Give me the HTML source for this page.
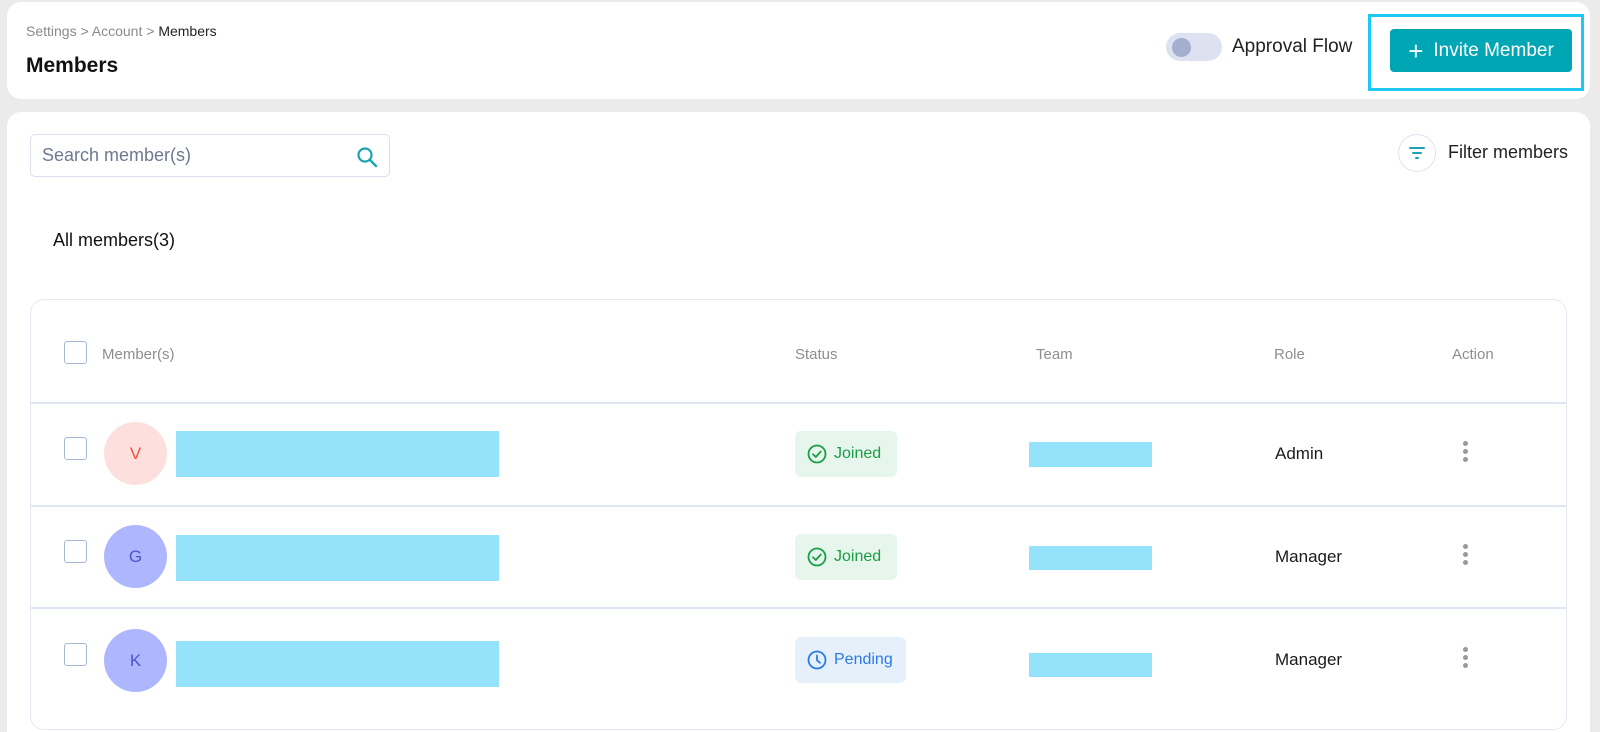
<!DOCTYPE html>
<html style="overflow:hidden;width:1600px;height:732px"><head><meta charset="utf-8"><style>
*{box-sizing:border-box;margin:0;padding:0}
body{width:1600px;height:732px;background:#ebebeb;font-family:"Liberation Sans",sans-serif;position:relative;overflow:hidden;color:#1a1a1a}
.abs{position:absolute}
.card{position:absolute;background:#fff;border-radius:14px}
.hdr{font-size:15px;color:#8e8e8e;top:346px}
.cb{position:absolute;width:23px;height:23px;border:1.5px solid #a9b6d3;border-radius:3px;background:#fff}
.line{position:absolute;left:31px;width:1535px;height:2px;background:#e1e6f3}
.av{position:absolute;width:63px;height:63px;border-radius:50%;font-size:17px;display:flex;align-items:center;justify-content:center}
.blue{position:absolute;background:#94e3fa}
.badge{position:absolute;height:46px;border-radius:6px;font-size:16px;display:flex;align-items:center;padding-left:12px;gap:7px}
.role{position:absolute;left:1275px;font-size:17px}
.dots{position:absolute;left:1463px;width:5px}
.dots i{display:block;width:5px;height:5px;border-radius:50%;background:#999;margin-bottom:3px}
</style></head><body>
<div class="card" style="left:7px;top:2px;width:1583px;height:97px"></div>
<div class="abs" style="left:26px;top:23px;font-size:14px;color:#8a8a8a">Settings &gt; Account &gt; <span style="color:#222">Members</span></div>
<div class="abs" style="left:26px;top:54px;font-size:21px;font-weight:bold;color:#111">Members</div>
<div class="abs" style="left:1166px;top:33px;width:56px;height:28px;border-radius:14px;background:#dde1f0"></div>
<div class="abs" style="left:1172px;top:38px;width:19px;height:19px;border-radius:50%;background:#a4afd0"></div>
<div class="abs" style="left:1232px;top:36px;font-size:19px;color:#222">Approval Flow</div>
<div class="abs" style="left:1368px;top:14px;width:216px;height:77px;border:3px solid #1ec8f0"></div>
<div class="abs" style="left:1390px;top:29px;width:182px;height:43px;background:#00a6b4;border-radius:4px;color:#fff;font-size:19px;display:flex;align-items:center;justify-content:center;gap:10px"><span style="font-size:26px;font-weight:300;line-height:1">+</span>Invite Member</div>

<div class="card" style="left:7px;top:112px;width:1583px;height:640px;border-bottom-left-radius:0;border-bottom-right-radius:0"></div>
<div class="abs" style="left:30px;top:134px;width:360px;height:43px;border:1.5px solid #d9e0ee;border-radius:5px"></div>
<div class="abs" style="left:42px;top:145px;font-size:18px;color:#6b7a90">Search member(s)</div>
<svg class="abs" style="left:356px;top:146px" width="22" height="22" viewBox="0 0 22 22"><circle cx="9" cy="9" r="6.5" fill="none" stroke="#1aa3b3" stroke-width="2.2"/><line x1="14" y1="14" x2="20" y2="20" stroke="#1aa3b3" stroke-width="2.4" stroke-linecap="round"/></svg>
<div class="abs" style="left:1398px;top:134px;width:38px;height:38px;border:1.5px solid #dde2ef;border-radius:50%"></div>
<svg class="abs" style="left:1408px;top:145px" width="18" height="16" viewBox="0 0 18 16"><g stroke="#1aa3b3" stroke-width="2" stroke-linecap="round"><line x1="2" y1="3" x2="16" y2="3"/><line x1="5" y1="8" x2="13" y2="8"/><line x1="8" y1="13" x2="10" y2="13"/></g></svg>
<div class="abs" style="left:1448px;top:142px;font-size:18px;color:#222">Filter members</div>
<div class="abs" style="left:53px;top:230px;font-size:18px;color:#111">All members(3)</div>

<div class="abs" style="left:30px;top:299px;width:1537px;height:431px;border:1.5px solid #e4e9f4;border-radius:14px;background:#fff"></div>
<div class="cb" style="left:64px;top:341px"></div>
<div class="abs hdr" style="left:102px">Member(s)</div>
<div class="abs hdr" style="left:795px">Status</div>
<div class="abs hdr" style="left:1036px">Team</div>
<div class="abs hdr" style="left:1274px">Role</div>
<div class="abs hdr" style="left:1452px">Action</div>
<div class="line" style="top:402px"></div>
<div class="line" style="top:505px"></div>
<div class="line" style="top:607px"></div>

<!-- row1 -->
<div class="cb" style="left:64px;top:437px"></div>
<div class="av" style="left:104px;top:422px;background:#fde0dd;color:#f0503a">V</div>
<div class="blue" style="left:176px;top:431px;width:323px;height:46px"></div>
<div class="badge" style="left:795px;top:431px;width:102px;background:#e6f6ec;color:#1a9e45"><svg width="20" height="20" viewBox="0 0 20 20"><circle cx="10" cy="10" r="8.5" fill="none" stroke="#1a9e45" stroke-width="1.8"/><path d="M6 10.2l2.8 2.8 5-5.5" fill="none" stroke="#1a9e45" stroke-width="1.8" stroke-linecap="round" stroke-linejoin="round"/></svg>Joined</div>
<div class="blue" style="left:1029px;top:442px;width:123px;height:25px"></div>
<div class="role" style="top:444px">Admin</div>
<div class="dots" style="top:441px"><i></i><i></i><i></i></div>

<!-- row2 -->
<div class="cb" style="left:64px;top:540px"></div>
<div class="av" style="left:104px;top:525px;background:#aeb7fd;color:#4b56c8">G</div>
<div class="blue" style="left:176px;top:535px;width:323px;height:46px"></div>
<div class="badge" style="left:795px;top:534px;width:102px;background:#e6f6ec;color:#1a9e45"><svg width="20" height="20" viewBox="0 0 20 20"><circle cx="10" cy="10" r="8.5" fill="none" stroke="#1a9e45" stroke-width="1.8"/><path d="M6 10.2l2.8 2.8 5-5.5" fill="none" stroke="#1a9e45" stroke-width="1.8" stroke-linecap="round" stroke-linejoin="round"/></svg>Joined</div>
<div class="blue" style="left:1029px;top:546px;width:123px;height:24px"></div>
<div class="role" style="top:547px">Manager</div>
<div class="dots" style="top:544px"><i></i><i></i><i></i></div>

<!-- row3 -->
<div class="cb" style="left:64px;top:643px"></div>
<div class="av" style="left:104px;top:629px;background:#aeb7fd;color:#4b56c8">K</div>
<div class="blue" style="left:176px;top:641px;width:323px;height:46px"></div>
<div class="badge" style="left:795px;top:637px;width:111px;background:#e6f0fb;color:#2a7ae2"><svg width="20" height="20" viewBox="0 0 20 20"><circle cx="10" cy="10" r="8.5" fill="none" stroke="#2a7ae2" stroke-width="1.8"/><path d="M10 5.5v4.8l3 2.5" fill="none" stroke="#2a7ae2" stroke-width="1.8" stroke-linecap="round" stroke-linejoin="round"/></svg>Pending</div>
<div class="blue" style="left:1029px;top:653px;width:123px;height:24px"></div>
<div class="role" style="top:650px">Manager</div>
<div class="dots" style="top:647px"><i></i><i></i><i></i></div>
</body></html>
